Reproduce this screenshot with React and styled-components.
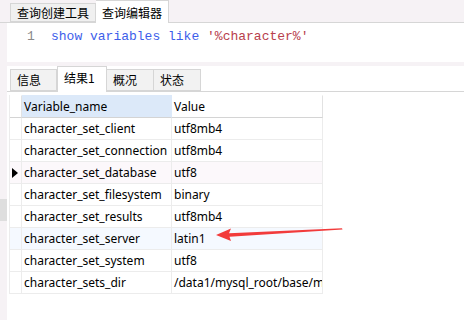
import styled, { createGlobalStyle } from "styled-components";

const GlobalStyle = createGlobalStyle`
  html, body {
    margin: 0;
    padding: 0;
    background: #ffffff;
  }
  body {
    font-family: "Noto Sans", "Noto Sans CJK SC", sans-serif;
  }
`;

const colors = {
  chrome: "#f6f2f5",
  border: "#d6d6d6",
  lightLine: "#ececec",
  keyword: "#3d5eea",
  string: "#b8404c",
};

const rows = [
  { name: "character_set_client", value: "utf8mb4" },
  { name: "character_set_connection", value: "utf8mb4" },
  { name: "character_set_database", value: "utf8", current: true },
  { name: "character_set_filesystem", value: "binary" },
  { name: "character_set_results", value: "utf8mb4" },
  { name: "character_set_server", value: "latin1", hover: true },
  { name: "character_set_system", value: "utf8" },
  { name: "character_sets_dir", value: "/data1/mysql_root/base/mysql/share/charsets/" },
];

const App = () => {
  return (
    <Root>
      <GlobalStyle />
      <TopTabBar>
        <TopTab>查询创建工具</TopTab>
        <TopTab active>查询编辑器</TopTab>
      </TopTabBar>
      <Body>
        <LeftStrip>
          <Handle />
        </LeftStrip>
        <Main>
          <Editor>
            <LineNo>1</LineNo>
            <Code>
              <Keyword>show variables like </Keyword>
              <Str>'%character%'</Str>
            </Code>
          </Editor>
          <Band />
          <ResultTabBar>
            <ResultTab>信息</ResultTab>
            <ResultTab active>结果1</ResultTab>
            <ResultTab>概况</ResultTab>
            <ResultTab>状态</ResultTab>
          </ResultTabBar>
          <GridWrap>
            <Grid>
              <HeadCell />
              <HeadCell selected>Variable_name</HeadCell>
              <HeadCell>Value</HeadCell>
              {rows.map((r) => (
                <Row key={r.name} current={r.current} hover={r.hover}>
                  <Indicator>{r.current ? <Pointer /> : null}</Indicator>
                  <Cell>{r.name}</Cell>
                  <Cell>{r.value}</Cell>
                </Row>
              ))}
            </Grid>
            <Arrow viewBox="0 0 130 16" width="130" height="16">
              <polygon
                points="0,8 15,1.5 13,6.2 126,1.2 126.5,2.4 13.5,9.8 15,14"
                fill="#f23b3b"
              />
            </Arrow>
          </GridWrap>
        </Main>
      </Body>
    </Root>
  );
};

const Root = styled.div`
  width: 464px;
  height: 320px;
  display: flex;
  flex-direction: column;
  overflow: hidden;
`;

const TopTabBar = styled.div`
  height: 22px;
  display: flex;
  align-items: flex-end;
  padding-left: 10px;
  background: ${colors.chrome};
  border-bottom: 1px solid ${colors.border};
`;

const TopTab = styled.div`
  box-sizing: border-box;
  height: ${(p) => (p.active ? "23px" : "19px")};
  margin-bottom: ${(p) => (p.active ? "-1px" : "0")};
  padding: 0 6px;
  display: flex;
  align-items: center;
  font-family: "Noto Sans CJK SC", sans-serif;
  font-size: 12px;
  color: #000;
  background: ${(p) => (p.active ? "#ffffff" : "#f0f0f0")};
  border: 1px solid ${colors.border};
  border-bottom: ${(p) => (p.active ? "none" : `1px solid ${colors.border}`)};
  border-left: ${(p) => (p.active ? "none" : `1px solid ${colors.border}`)};
`;

const Body = styled.div`
  flex: 1;
  display: flex;
`;

const LeftStrip = styled.div`
  width: 7px;
  background: ${colors.chrome};
  padding-top: 176px;
`;

const Handle = styled.div`
  width: 7px;
  height: 22px;
  background: #dedede;
`;

const Main = styled.div`
  flex: 1;
  display: flex;
  flex-direction: column;
`;

const Editor = styled.div`
  height: 39px;
  display: flex;
  align-items: flex-start;
  padding-top: 6px;
  box-sizing: border-box;
  font-family: "Liberation Mono", monospace;
  font-size: 13px;
  line-height: 16px;
`;

const LineNo = styled.span`
  width: 44px;
  padding-left: 20px;
  box-sizing: border-box;
  color: #8a8a8a;
`;

const Code = styled.span`
  white-space: pre;
`;

const Keyword = styled.span`
  color: ${colors.keyword};
`;

const Str = styled.span`
  color: ${colors.string};
`;

const Band = styled.div`
  height: 4px;
  background: ${colors.chrome};
`;

const ResultTabBar = styled.div`
  height: 25px;
  display: flex;
  align-items: flex-end;
  padding-left: 3px;
  border-bottom: 1px solid ${colors.border};
`;

const ResultTab = styled.div`
  box-sizing: border-box;
  width: ${(p) => (p.active ? "50px" : "47px")};
  height: ${(p) => (p.active ? "26px" : "22px")};
  margin-bottom: ${(p) => (p.active ? "-1px" : "0")};
  padding: ${(p) => (p.active ? "0 0 5px 6px" : "0 0 1px 6px")};
  display: flex;
  align-items: center;
  font-family: "Noto Sans CJK SC", sans-serif;
  font-size: 12px;
  color: #000;
  background: ${(p) => (p.active ? "#ffffff" : "#f2f2f2")};
  border: 1px solid ${colors.border};
  border-left: ${(p) => (p.active ? `1px solid ${colors.border}` : "none")};
  border-bottom: ${(p) => (p.active ? "none" : `1px solid ${colors.border}`)};

  &:first-child {
    border-left: 1px solid ${colors.border};
  }
`;

const GridWrap = styled.div`
  position: relative;
  padding: 3px 0 0 2px;
`;

const Grid = styled.div`
  display: grid;
  grid-template-columns: 12px 150px 151px;
  width: 313px;
  border-left: 1px solid ${colors.lightLine};
  font-family: "Noto Sans", "Noto Sans CJK SC", sans-serif;
  font-size: 12px;
  color: #000;
`;

const HeadCell = styled.div`
  box-sizing: border-box;
  height: 23px;
  padding-left: 2px;
  display: flex;
  align-items: center;
  background: ${(p) => (p.selected ? "#dce9f9" : "#ffffff")};
  border-bottom: 1px solid #d4d4d4;
  border-right: 1px solid ${(p) => (p.selected ? "#dce9f9" : "#e2e2e2")};
  border-top: 1px solid ${(p) => (p.selected ? "#dce9f9" : "#ffffff")};

  &:first-child {
    border-right: 1px solid #e2e2e2;
  }
  &:last-of-type {
    border-right: 1px solid #d4d4d4;
  }
`;

const Row = styled.div`
  display: contents;

  & > div {
    background: ${(p) =>
      p.current ? "#fcf8fb" : p.hover ? "#f5f9ff" : "#ffffff"};
  }
`;

const Cell = styled.div`
  box-sizing: border-box;
  height: 22px;
  padding-left: 2px;
  display: flex;
  align-items: center;
  white-space: nowrap;
  overflow: hidden;
  border-bottom: 1px solid ${colors.lightLine};
  border-right: 1px solid ${colors.lightLine};
`;

const Indicator = styled(Cell)`
  padding-left: 2px;
`;

const Pointer = styled.span`
  width: 0;
  height: 0;
  border-top: 5px solid transparent;
  border-bottom: 5px solid transparent;
  border-left: 6px solid #000;
`;

const Arrow = styled.svg`
  position: absolute;
  left: 209px;
  top: 135px;
  pointer-events: none;
`;

export default App;
